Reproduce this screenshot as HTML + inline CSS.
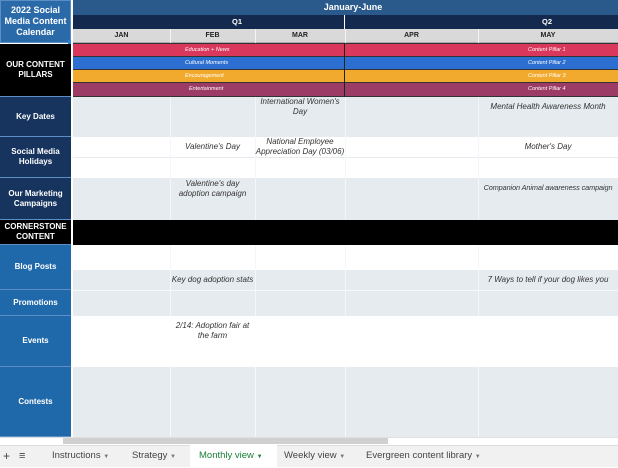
<!DOCTYPE html><html><head><style>
*{margin:0;padding:0;box-sizing:border-box}
body{width:618px;height:467px;overflow:hidden;background:#fff;font-family:"Liberation Sans",sans-serif;position:relative}
.a{position:absolute}
.lab{position:absolute;left:0;width:71px;color:#fff;font-weight:bold;font-size:8px;display:flex;align-items:center;justify-content:center;text-align:center;line-height:10px;border-bottom:1px solid #5b8ec4}
.t{position:absolute;font-style:italic;font-size:8px;color:#333;text-align:center;line-height:10px;display:flex;align-items:center;justify-content:center}
.p{position:absolute;left:73px;width:545px;height:12px;font-size:5.5px;font-style:italic;color:#fff}
.p span{position:absolute;top:3px}
.v{position:absolute;width:1px;background:#fff}
.tab{position:absolute;top:445px;height:22px;font-size:9.5px;color:#444;line-height:22px}
</style></head><body>
<div class="lab" style="top:0;height:43px;background:#2b6aa8;font-size:9px;line-height:11px;border:1px solid #5b8ec4">2022 Social<br>Media Content<br>Calendar</div>
<div class="a" style="left:68px;top:40px;width:4px;height:4px;background:#2f7fe0"></div>
<div class="lab" style="top:44px;height:53px;background:#000">OUR CONTENT<br>PILLARS</div>
<div class="lab" style="top:97px;height:40px;background:#16345e">Key Dates</div>
<div class="lab" style="top:137px;height:41px;background:#16345e">Social Media<br>Holidays</div>
<div class="lab" style="top:178px;height:42px;background:#16345e">Our Marketing<br>Campaigns</div>
<div class="lab" style="top:220px;height:25px;background:#000">CORNERSTONE<br>CONTENT</div>
<div class="lab" style="top:245px;height:45px;background:#1f69aa">Blog Posts</div>
<div class="lab" style="top:290px;height:26px;background:#1f69aa">Promotions</div>
<div class="lab" style="top:316px;height:51px;background:#1f69aa">Events</div>
<div class="lab" style="top:367px;height:70px;background:#1f69aa">Contests</div>
<div class="a" style="left:71px;top:0;width:2px;height:437px;background:#fff"></div>
<div class="a" style="left:73px;top:0;width:545px;height:15px;background:#2a5a8c;color:#fff;font-weight:bold;font-size:9px;text-align:center;line-height:15px;padding-left:15px">January-June</div>
<div class="a" style="left:73px;top:15px;width:545px;height:14px;background:#13294d"></div>
<div class="a" style="left:344px;top:15px;width:1px;height:14px;background:#fff"></div>
<div class="a" style="left:232px;top:15px;color:#fff;font-size:7.5px;font-weight:bold;line-height:14px">Q1</div>
<div class="a" style="left:542px;top:15px;color:#fff;font-size:7.5px;font-weight:bold;line-height:14px">Q2</div>
<div class="a" style="left:73px;top:29px;width:545px;height:14px;background:#d9d9d9;border-bottom:1px solid #aaa"></div>
<div class="a" style="left:73px;top:29px;width:97px;font-size:7px;font-weight:bold;color:#222;text-align:center;line-height:13px">JAN</div>
<div class="a" style="left:170px;top:29px;width:85px;font-size:7px;font-weight:bold;color:#222;text-align:center;line-height:13px">FEB</div>
<div class="a" style="left:255px;top:29px;width:90px;font-size:7px;font-weight:bold;color:#222;text-align:center;line-height:13px">MAR</div>
<div class="a" style="left:345px;top:29px;width:133px;font-size:7px;font-weight:bold;color:#222;text-align:center;line-height:13px">APR</div>
<div class="a" style="left:478px;top:29px;width:140px;font-size:7px;font-weight:bold;color:#222;text-align:center;line-height:13px">MAY</div>
<div class="a" style="left:170px;top:29px;width:1px;height:14px;background:#f4f4f4"></div>
<div class="a" style="left:255px;top:29px;width:1px;height:14px;background:#f4f4f4"></div>
<div class="a" style="left:345px;top:29px;width:1px;height:14px;background:#f4f4f4"></div>
<div class="a" style="left:478px;top:29px;width:1px;height:14px;background:#f4f4f4"></div>
<div class="a" style="left:73px;top:43px;width:545px;height:54px;background:#333"></div>
<div class="p" style="top:44px;background:#d9375c"><span style="left:112px">Education + News</span><span style="left:455px">Content Pillar 1</span></div>
<div class="p" style="top:57px;background:#2d6fd1"><span style="left:112px">Cultural Moments</span><span style="left:455px">Content Pillar 2</span></div>
<div class="p" style="top:70px;background:#f2aa2e"><span style="left:112px">Encouragement</span><span style="left:455px">Content Pillar 3</span></div>
<div class="p" style="top:83px;background:#9c3c66;height:13px"><span style="left:116px">Entertainment</span><span style="left:455px">Content Pillar 4</span></div>
<div class="a" style="left:344px;top:43px;width:1px;height:54px;background:#222"></div>
<div class="a" style="left:73px;top:97px;width:545px;height:40px;background:#e6ebef"></div>
<div class="a" style="left:73px;top:137px;width:545px;height:41px;background:#fff"></div>
<div class="a" style="left:73px;top:157px;width:545px;height:1px;background:#e6ebef"></div>
<div class="a" style="left:73px;top:178px;width:545px;height:42px;background:#e6ebef"></div>
<div class="a" style="left:73px;top:220px;width:545px;height:25px;background:#000"></div>
<div class="a" style="left:73px;top:245px;width:545px;height:25px;background:#fff"></div>
<div class="a" style="left:73px;top:270px;width:545px;height:46px;background:#e6ebef"></div>
<div class="a" style="left:73px;top:290px;width:545px;height:1px;background:#f6f8fa"></div>
<div class="a" style="left:73px;top:316px;width:545px;height:51px;background:#fff"></div>
<div class="a" style="left:73px;top:367px;width:545px;height:70px;background:#e6ebef"></div>
<div class="v" style="left:170px;top:97px;height:123px;background:#f4f6f8"></div>
<div class="v" style="left:255px;top:97px;height:123px;background:#f4f6f8"></div>
<div class="v" style="left:345px;top:97px;height:123px;background:#f4f6f8"></div>
<div class="v" style="left:478px;top:97px;height:123px;background:#f4f6f8"></div>
<div class="v" style="left:170px;top:245px;height:71px;background:#f4f6f8"></div>
<div class="v" style="left:255px;top:245px;height:71px;background:#f4f6f8"></div>
<div class="v" style="left:345px;top:245px;height:71px;background:#f4f6f8"></div>
<div class="v" style="left:478px;top:245px;height:71px;background:#f4f6f8"></div>
<div class="v" style="left:170px;top:367px;height:70px;background:#f6f8fa"></div>
<div class="v" style="left:255px;top:367px;height:70px;background:#f6f8fa"></div>
<div class="v" style="left:345px;top:367px;height:70px;background:#f6f8fa"></div>
<div class="v" style="left:478px;top:367px;height:70px;background:#f6f8fa"></div>
<div class="t" style="left:255px;top:97px;width:90px;height:20px">International Women's<br>Day</div>
<div class="t" style="left:478px;top:97px;width:140px;height:20px">Mental Health Awareness Month</div>
<div class="t" style="left:170px;top:137px;width:85px;height:20px">Valentine's Day</div>
<div class="t" style="left:252px;top:137px;width:96px;height:20px">National Employee<br>Appreciation Day (03/06)</div>
<div class="t" style="left:478px;top:137px;width:140px;height:20px">Mother's Day</div>
<div class="t" style="left:165px;top:178px;width:95px;height:22px">Valentine's day<br>adoption campaign</div>
<div class="t" style="left:478px;top:178px;width:140px;height:20px;white-space:nowrap;font-size:7.3px;letter-spacing:-0.1px">Companion Animal awareness campaign</div>
<div class="t" style="left:160px;top:270px;width:105px;height:20px">Key dog adoption stats</div>
<div class="t" style="left:478px;top:270px;width:140px;height:20px">7 Ways to tell if your dog likes you</div>
<div class="t" style="left:165px;top:320px;width:95px;height:22px">2/14: Adoption fair at<br>the farm</div>
<div class="a" style="left:0;top:437px;width:618px;height:8px;background:#fff;border-top:1px solid #e0e0e0"></div>
<div class="a" style="left:63px;top:438px;width:325px;height:6px;background:#d0d0d0"></div>
<div class="a" style="left:0;top:445px;width:618px;height:22px;background:#f1f1f1;border-top:1px solid #ddd"></div>
<div class="a" style="left:190px;top:445px;width:87px;height:22px;background:#fff"></div>
<div class="tab" style="left:3px;font-size:12px">+</div>
<div class="tab" style="left:19px;font-size:11px">≡</div>
<div class="tab" style="left:52px">Instructions <span style="font-size:6px;color:#777">▼</span></div>
<div class="tab" style="left:132px">Strategy <span style="font-size:6px;color:#777">▼</span></div>
<div class="tab" style="left:199px;color:#188038">Monthly view <span style="font-size:6px">▼</span></div>
<div class="tab" style="left:284px">Weekly view <span style="font-size:6px;color:#777">▼</span></div>
<div class="tab" style="left:366px">Evergreen content library <span style="font-size:6px;color:#777">▼</span></div>
</body></html>
